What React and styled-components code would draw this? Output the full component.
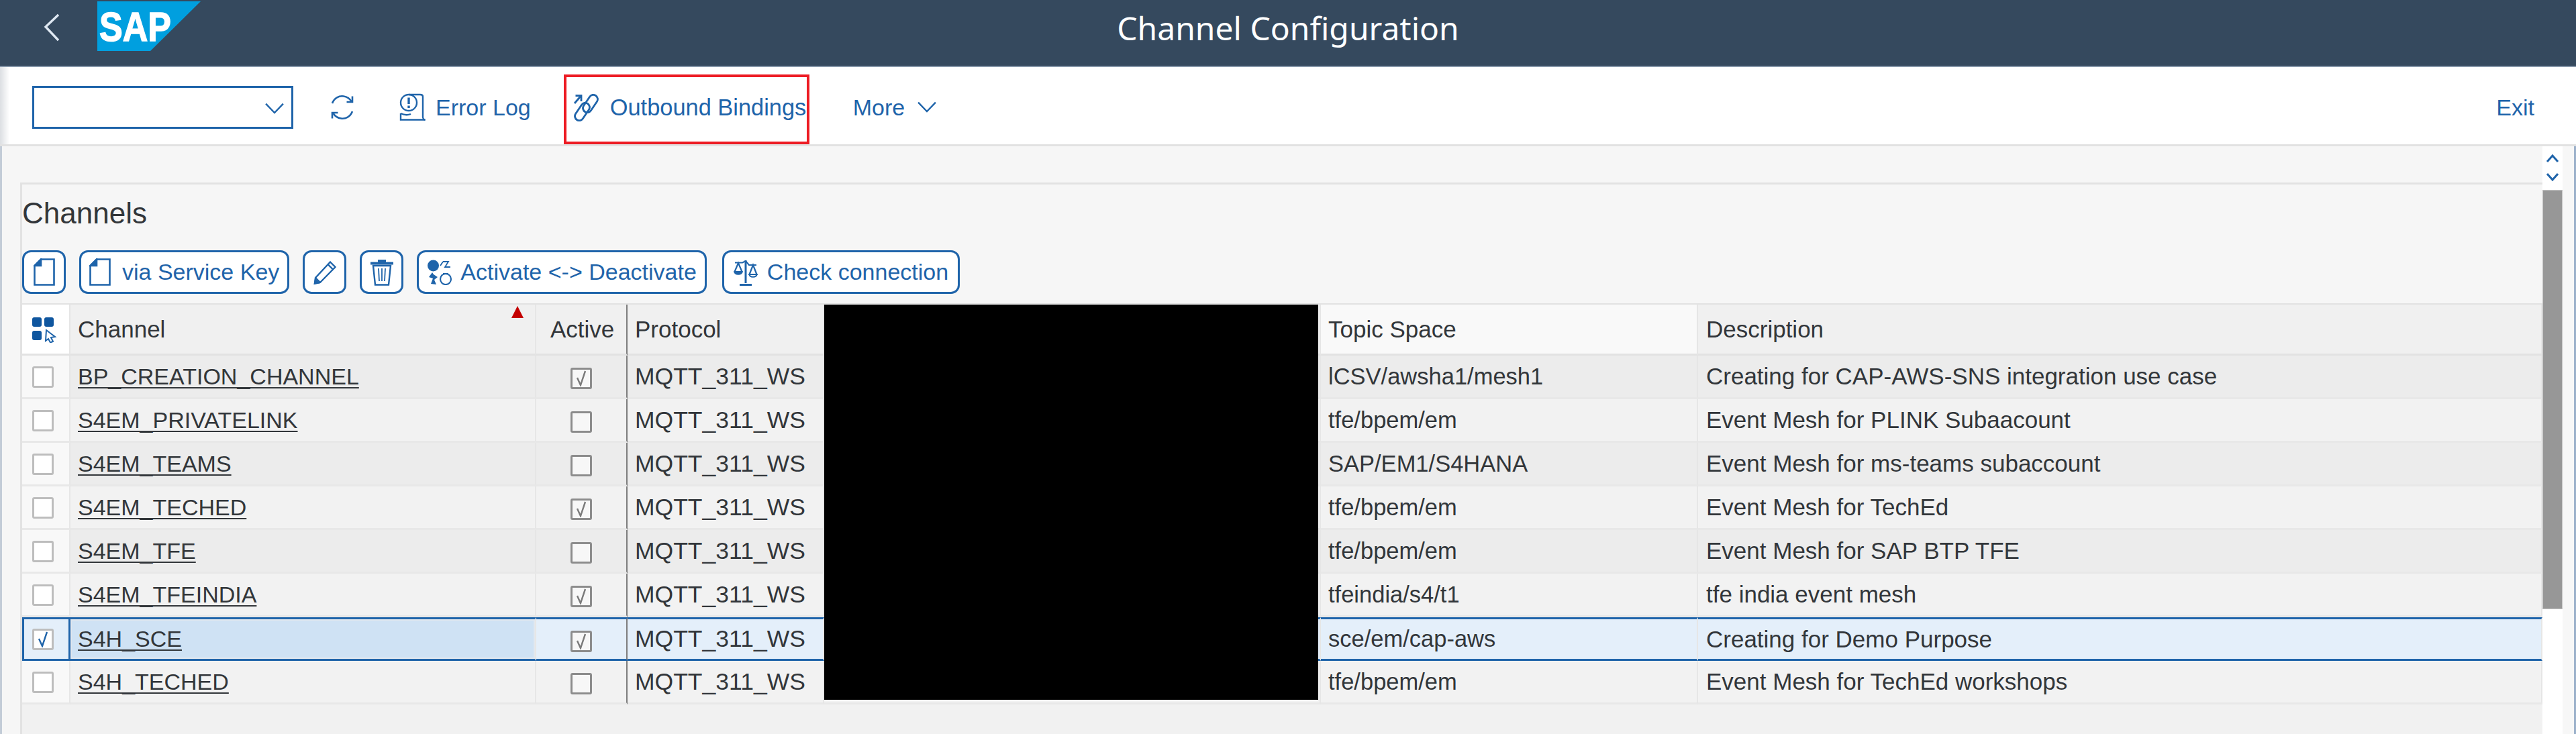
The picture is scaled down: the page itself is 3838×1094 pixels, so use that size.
import React from "react"
import styled, { createGlobalStyle } from "styled-components"

const BLUE = "#1f64aa"
const COLUMNS = "72px 694px 136px 293px 740px 562px 1fr"

const rows = [
	{ name: "BP_CREATION_CHANNEL", active: true, topic: "lCSV/awsha1/mesh1", text: "Creating for CAP-AWS-SNS integration use case" },
	{ name: "S4EM_PRIVATELINK", active: false, topic: "tfe/bpem/em", text: "Event Mesh for PLINK Subaacount" },
	{ name: "S4EM_TEAMS", active: false, topic: "SAP/EM1/S4HANA", text: "Event Mesh for ms-teams subaccount" },
	{ name: "S4EM_TECHED", active: true, topic: "tfe/bpem/em", text: "Event Mesh for TechEd" },
	{ name: "S4EM_TFE", active: false, topic: "tfe/bpem/em", text: "Event Mesh for SAP BTP TFE" },
	{ name: "S4EM_TFEINDIA", active: true, topic: "tfeindia/s4/t1", text: "tfe india event mesh" },
	{ name: "S4H_SCE", active: true, topic: "sce/em/cap-aws", text: "Creating for Demo Purpose", selected: true },
	{ name: "S4H_TECHED", active: false, topic: "tfe/bpem/em", text: "Event Mesh for TechEd workshops" },
]

const GlobalStyle = createGlobalStyle`
	html, body {
		margin: 0;
		padding: 0;
		background: #fff;
	}
	body {
		font-family: "Liberation Sans", Arial, sans-serif;
		font-size: 34px;
		overflow: hidden;
	}
`

const Page = styled.div`
	width: 3838px;
	height: 1094px;
	display: flex;
	flex-direction: column;
	overflow: hidden;
`

const ShellBar = styled.header`
	height: 100px;
	flex: none;
	box-sizing: border-box;
	background: #35495e;
	border-bottom: 2px solid #8495a8;
	display: grid;
	grid-template-columns: 1fr auto 1fr;
	align-items: start;
`

const ShellLeft = styled.div`
	display: flex;
	align-items: flex-start;
	padding: 2px 0 0 64px;
	gap: 55px;
`

const BackIcon = styled.svg`
	width: 26px;
	height: 42px;
	margin-top: 18px;
	flex: none;
`

const Logo = styled.svg`
	width: 154px;
	height: 74px;
	flex: none;
`

const ShellTitle = styled.h1`
	margin: 0;
	padding-top: 8px;
	font-family: "Noto Sans", "Open Sans", sans-serif;
	font-size: 48px;
	line-height: 68px;
	font-weight: 400;
	color: #fff;
	white-space: nowrap;
`

const Toolbar = styled.div`
	height: 118px;
	flex: none;
	box-sizing: border-box;
	display: flex;
	align-items: center;
	padding: 5px 62px 0 48px;
	background: linear-gradient(90deg, #dcdfe3 0, #fff 14px);
	border-bottom: 3px solid #e2e2e2;
`

const Dropdown = styled.div`
	width: 389px;
	height: 64px;
	box-sizing: border-box;
	border: 3px solid ${BLUE};
	background: #fff;
	display: flex;
	align-items: center;
	justify-content: flex-end;
	padding: 4px 11px 0 0;
`

const ToolItem = styled.div`
	display: flex;
	align-items: center;
	gap: ${(p) => p.$gap || 15}px;
	margin-left: ${(p) => p.$left || 0}px;
	color: ${BLUE};
	font-size: ${(p) => p.$size || 34}px;
	white-space: nowrap;
`

const Highlight = styled.div`
	height: 104px;
	width: 366px;
	box-sizing: border-box;
	border: 4px solid #ed1c24;
	margin: 6px 0 0 ${(p) => p.$left}px;
	padding: 0 0 6px 10px;
	display: flex;
	align-items: center;
`

const Spacer = styled.div`
	flex: 1;
`

const Main = styled.main`
	flex: 1;
	min-height: 0;
	display: flex;
	background: #f6f6f6;
	border-left: 3px solid #c3ccd7;
	border-right: 3px solid #9db2cb;
`

const Panel = styled.section`
	flex: 1;
	min-width: 0;
	margin: 54px 0 0 27px;
	box-sizing: border-box;
	border-top: 3px solid #e2e2e2;
	border-left: 3px solid #e2e2e2;
	display: flex;
	flex-direction: column;
	background: linear-gradient(#f6f6f6 0, #f6f6f6 177px, #f1f1f1 177px);
`

const PanelTitle = styled.h2`
	margin: 0;
	height: 98px;
	box-sizing: border-box;
	padding-top: 13px;
	font-size: 44px;
	line-height: 60px;
	font-weight: 400;
	color: #32363a;
`

const ButtonRow = styled.div`
	display: flex;
	gap: 20px;
	height: 79px;
`

const Button = styled.button`
	height: 65px;
	min-width: 65px;
	box-sizing: border-box;
	border: 3px solid ${BLUE};
	border-radius: 13px;
	background: #fff;
	color: ${BLUE};
	font: inherit;
	font-size: 34px;
	display: flex;
	align-items: center;
	justify-content: center;
	gap: ${(p) => p.$gap || 15}px;
	margin-left: ${(p) => p.$left || 0}px;
	padding: 0 ${(p) => (p.$iconOnly ? 0 : p.$pad || 12)}px;
	white-space: nowrap;
`

const Table = styled.div`
	position: relative;
	border-top: 2px solid #e2e2e2;
`

const Row = styled.div`
	display: grid;
	grid-template-columns: ${COLUMNS};
	height: ${(p) => (p.$header ? 76 : 65)}px;
`

const Cell = styled.div`
	box-sizing: border-box;
	position: relative;
	min-width: 0;
	display: flex;
	align-items: center;
	padding-left: ${(p) => p.$pad ?? 11}px;
	color: #32363a;
	font-size: ${(p) => p.$size || 34}px;
	white-space: nowrap;
	background: ${(p) => {
		if (p.$selected) return "#e4effa"
		if (p.$header) return p.$light ? "#f9f9f9" : "#f0f0f0"
		return p.$alt ? "#ececec" : "#f2f2f2"
	}};
	border-bottom: 3px solid ${(p) => (p.$header ? "#e2e2e2" : "#e8e8e8")};
	border-right: 2px solid ${(p) => (p.$dark ? "#7d7d7d" : "#e6e6e6")};
	${(p) =>
		p.$selected &&
		`
		border-top: 3px solid ${BLUE};
		border-bottom: 3px solid ${BLUE};
	`}
`

const SelectCell = styled(Cell)`
	padding: 2px 0 0 15px;
	background: ${(p) => (p.$selected ? "#e4effa" : p.$header ? "#fff" : "#f8f8f8")};
	${(p) => p.$selected && `border: 3px solid ${BLUE}; padding: 0 0 0 12px;`}
`

const FocusCell = styled(Cell)`
	background: #cfe2f4;
	box-shadow: inset 0 0 0 2px #e2e8ef;
`

const ChannelLink = styled.span`
	text-decoration: underline;
	text-underline-offset: 4px;
	text-decoration-thickness: 2px;
`

const Check = styled.span`
	width: 32px;
	height: 32px;
	box-sizing: border-box;
	flex: none;
	display: flex;
	align-items: center;
	justify-content: center;
	border: 3px solid ${(p) => (p.$readonly ? "#8c8c8c" : "#bdbdbd")};
	border-radius: 3px;
	background: ${(p) => (p.$readonly ? "#f7f7f7" : "#fff")};
	margin-top: ${(p) => (p.$readonly ? 6 : 0)}px;
`

const SortMark = styled.span`
	position: absolute;
	top: 2px;
	right: 17px;
	width: 0;
	height: 0;
	border-left: 9px solid transparent;
	border-right: 9px solid transparent;
	border-bottom: 18px solid #c40000;
`

const Redaction = styled.div`
	position: absolute;
	left: 1195px;
	top: 0;
	width: 736px;
	height: 589px;
	background: #000;
`

const ScrollBar = styled.aside`
	width: 30px;
	flex: none;
	display: flex;
	flex-direction: column;
	align-items: center;
	background: #fff;
	padding-top: 11px;
	box-sizing: border-box;
`

const ScrollArrow = styled.svg`
	width: 20px;
	height: 14px;
	margin-bottom: 14px;
	flex: none;
`

const ScrollThumb = styled.div`
	width: 100%;
	height: 625px;
	margin-top: -2px;
	box-sizing: border-box;
	background: #979797;
	border: 1px solid #c4c4c4;
`

const Gutter = styled.div`
	width: 17px;
	flex: none;
	background: #f7f7f7;
`

const DocIcon = () => (
	<svg width="32" height="41" viewBox="0 0 32 41" fill="none" stroke={BLUE} strokeWidth="2.6">
		<path d="M11 1.5H30.5V39.5H1.5V11Z" />
		<path d="M11 1.5V11H1.5Z" fill={BLUE} />
	</svg>
)

const RefreshIcon = () => (
	<svg width="40" height="40" viewBox="0 0 40 40" fill="none" stroke={BLUE} strokeWidth="2.6">
		<path d="M5 14C8 6 15 2.500 22 3.500C27 4.200 31 7 33.500 11" />
		<path d="M35 26C32 34 25 37.500 18 36.500C13 35.800 9 33 6.500 29" />
		<path d="M35 3.500V12H26.500" />
		<path d="M5 36.500V28H13.500" />
	</svg>
)

const ErrorLogIcon = () => (
	<svg width="40" height="42" viewBox="0 0 40 42" fill="none" stroke={BLUE} strokeWidth="2.4">
		<circle cx="14" cy="14" r="12" />
		<path d="M14 6.500V16" strokeWidth="3.400" />
		<path d="M14 18.500V22" strokeWidth="3.400" />
		<path d="M14 2H31C33 2 35 2 35 5V35" />
		<path d="M2 30V39.500H38.500" />
		<path d="M35 35C35 38 37 39.500 38.500 39.500" />
		<path d="M2 30C6 32 12 33 17 31" />
	</svg>
)

const LinkIcon = () => (
	<svg width="38" height="42" viewBox="0 0 38 42" fill="none" stroke={BLUE} strokeWidth="2.8">
		<rect x="11" y="9" width="29" height="13" rx="6.500" transform="rotate(-56 25.500 15.500)" />
		<rect x="-1" y="21" width="29" height="13" rx="6.500" transform="rotate(-56 13.500 27.500)" />
		<path d="M2 15L11 4.500" />
		<path d="M3.500 3.500H12V12" />
	</svg>
)

const ChevronDown = ({ size = 28 }) => (
	<svg width={size} height={size * 0.62} viewBox="0 0 26 16" fill="none" stroke={BLUE} strokeWidth="2.200">
		<path d="M1 1.500L13 14L25 1.500" />
	</svg>
)

const PencilIcon = () => (
	<svg width="36" height="36" viewBox="0 0 36 36" fill="none" stroke={BLUE} strokeWidth="2.400">
		<path d="M26 2.500L33.500 10L11 33L3 34.500L4 26Z" />
		<path d="M4 26L11 33" />
		<path d="M3 34.500L4 29L8.500 33.500Z" fill={BLUE} />
		<path d="M22.500 6L30 13.500" />
	</svg>
)

const TrashIcon = () => (
	<svg width="36" height="40" viewBox="0 0 36 40" fill="none" stroke={BLUE} strokeWidth="2.400">
		<path d="M1 6.500H35" strokeWidth="4" />
		<path d="M12 3H24" strokeWidth="4" />
		<path d="M5 10L8 38.500H28L31 10Z" />
		<path d="M13 14L14 33" strokeWidth="1.800" />
		<path d="M18 14V33" strokeWidth="1.800" />
		<path d="M23 14L22 33" strokeWidth="1.800" />
	</svg>
)

const ActivateIcon = () => (
	<svg width="40" height="38" viewBox="0 0 40 38" fill="none" stroke={BLUE} strokeWidth="2.200">
		<circle cx="9.500" cy="9" r="8.500" fill={BLUE} stroke="none" />
		<path d="M8 19L3 26L9 28L6 36L14 37L11 30L16 26L10 22Z" fill={BLUE} stroke="none" />
		<circle cx="28" cy="29" r="8" />
		<path d="M24 21L32 21" />
		<path d="M24 3L32 3L27 11L35 11" strokeWidth="1.800" />
		<path d="M20 9L24 3" strokeWidth="1.800" />
	</svg>
)

const ScaleIcon = () => (
	<svg width="36" height="40" viewBox="0 0 36 40" fill="none" stroke={BLUE} strokeWidth="2.200">
		<path d="M18 2V36" strokeWidth="3" />
		<path d="M9 38.500H27" strokeWidth="3" />
		<path d="M2 5.500H13L18 3L23 9H34" />
		<path d="M7 6L1.500 19H12.500Z" />
		<path d="M1.500 19C2 24 12 24 12.500 19Z" fill={BLUE} />
		<path d="M29 9L23.500 23H34.500Z" />
		<path d="M23.500 23C24 28 34 28 34.500 23Z" />
	</svg>
)

const VariantIcon = () => (
	<svg width="38" height="38" viewBox="0 0 38 38">
		<rect x="0" y="0" width="14" height="14" rx="3" fill="#0f569f" />
		<rect x="18" y="0" width="14" height="14" rx="3" fill="#0f569f" />
		<rect x="0" y="20" width="14" height="14" rx="3" fill="#0f569f" />
		<path d="M21 19L34 29L28 30L31 36L27 37.500L24 32L20 35Z" fill="#fff" stroke="#1f64aa" strokeWidth="2" />
	</svg>
)

const CheckMark = ({ color = "#7a7a7a" }) => (
	<svg width="16" height="24" viewBox="0 0 16 24" fill="none" stroke={color} strokeWidth="2.400">
		<path d="M2 11L7 22L14 1" />
	</svg>
)

const App = () => (
	<Page>
		<GlobalStyle />
		<ShellBar>
			<ShellLeft>
				<BackIcon viewBox="0 0 26 42" fill="none" stroke="#dfe8f2" strokeWidth="3.400">
					<path d="M23 2L4 20L23 40" />
				</BackIcon>
				<Logo viewBox="0 0 154 74">
					<polygon points="0,0 154,0 79,74 0,74" fill="#009fdf" />
					<text
						x="3"
						y="59"
						fill="#fff"
						stroke="#fff"
						strokeWidth="1.500"
						fontFamily="Liberation Sans"
						fontWeight="700"
						fontSize="61"
						textLength="107"
						lengthAdjust="spacingAndGlyphs"
					>
						SAP
					</text>
				</Logo>
			</ShellLeft>
			<ShellTitle>Channel Configuration</ShellTitle>
		</ShellBar>

		<Toolbar>
			<Dropdown>
				<ChevronDown />
			</Dropdown>
			<ToolItem $left={53}>
				<RefreshIcon />
			</ToolItem>
			<ToolItem $left={65} $gap={14}>
				<ErrorLogIcon />
				Error Log
			</ToolItem>
			<Highlight $left={49}>
				<ToolItem $gap={17} $size={34.4}>
					<LinkIcon />
					Outbound Bindings
				</ToolItem>
			</Highlight>
			<ToolItem $left={65} $gap={19}>
				More
				<ChevronDown />
			</ToolItem>
			<Spacer />
			<ToolItem>Exit</ToolItem>
		</Toolbar>

		<Main>
			<Panel>
				<PanelTitle>Channels</PanelTitle>
				<ButtonRow>
					<Button $iconOnly title="Create">
						<DocIcon />
					</Button>
					<Button $gap={17}>
						<DocIcon />
						via Service Key
					</Button>
					<Button $iconOnly title="Edit">
						<PencilIcon />
					</Button>
					<Button $iconOnly title="Delete">
						<TrashIcon />
					</Button>
					<Button $gap={10}>
						<ActivateIcon />
						Activate &lt;-&gt; Deactivate
					</Button>
					<Button $left={3} $pad={14} $gap={14}>
						<ScaleIcon />
						Check connection
					</Button>
				</ButtonRow>

				<Table>
					<Row $header>
						<SelectCell $header>
							<VariantIcon />
						</SelectCell>
						<Cell $header $size={35}>
							Channel
							<SortMark />
						</Cell>
						<Cell $header $dark $size={35} $pad={21}>
							Active
						</Cell>
						<Cell $header $size={35}>
							Protocol
						</Cell>
						<Cell $header />
						<Cell $header $light $size={35}>
							Topic Space
						</Cell>
						<Cell $header $size={35} $pad={12}>
							Description
						</Cell>
					</Row>
					{rows.map((row, i) => {
						const base = { $alt: i % 2 === 0, $selected: row.selected }
						const NameCell = row.selected ? FocusCell : Cell
						return (
							<Row key={row.name}>
								<SelectCell {...base}>
									<Check>{row.selected && <CheckMark color={BLUE} />}</Check>
								</SelectCell>
								<NameCell {...base}>
									<ChannelLink>{row.name}</ChannelLink>
								</NameCell>
								<Cell {...base} $dark $pad={51}>
									<Check $readonly>{row.active && <CheckMark />}</Check>
								</Cell>
								<Cell {...base} $size={35.5}>
									MQTT_311_WS
								</Cell>
								<Cell {...base} />
								<Cell {...base} $size={34.5}>
									{row.topic}
								</Cell>
								<Cell {...base} $size={35} $pad={12}>
									{row.text}
								</Cell>
							</Row>
						)
					})}
					<Redaction />
				</Table>
			</Panel>

			<ScrollBar>
				<ScrollArrow viewBox="0 0 20 14" fill="none" stroke={BLUE} strokeWidth="3">
					<path d="M2 12L10 3L18 12" />
				</ScrollArrow>
				<ScrollArrow viewBox="0 0 20 14" fill="none" stroke={BLUE} strokeWidth="3">
					<path d="M2 2L10 11L18 2" />
				</ScrollArrow>
				<ScrollThumb />
			</ScrollBar>
			<Gutter />
		</Main>
	</Page>
)

export default App
